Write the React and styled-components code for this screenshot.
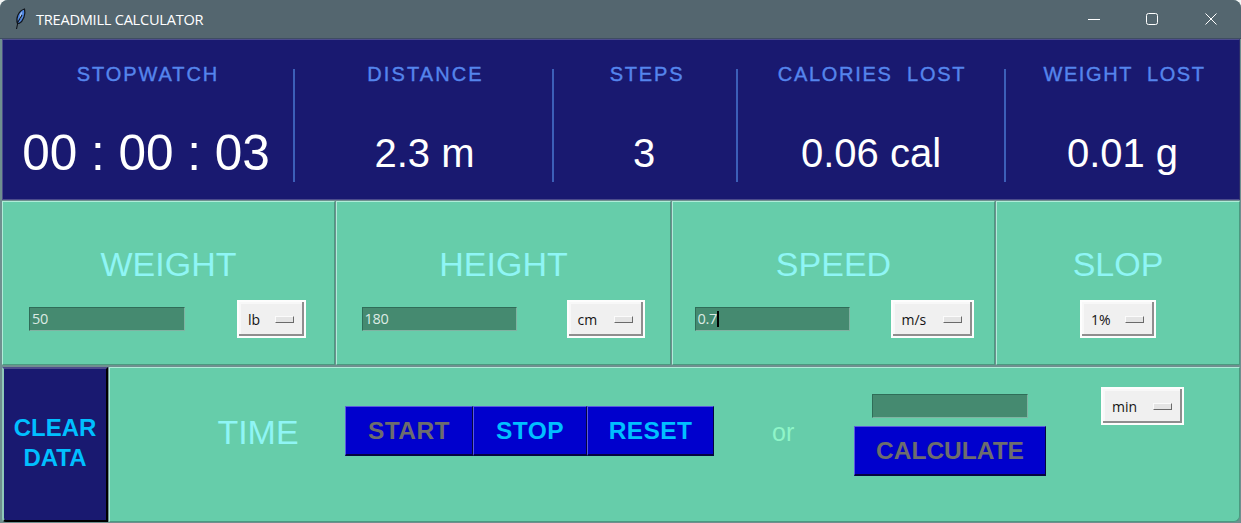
import React from "react";
import styled, { createGlobalStyle } from "styled-components";

const GlobalStyle = createGlobalStyle`
  html, body {
    margin: 0;
    padding: 0;
    background: #f3f5f5;
  }
`;

const Window = styled.div`
  width: 1241px;
  height: 523px;
  overflow: hidden;
  display: flex;
  flex-direction: column;
  background: #6f8f8f;
  border-radius: 8px 8px 0 0;
  font-family: "Liberation Sans", Arial, sans-serif;
`;

const TitleBar = styled.div`
  height: 39px;
  flex: none;
  display: flex;
  align-items: center;
  background: #54666f;
  border-bottom: 1px solid #3f4d63;
  box-sizing: border-box;
  padding-left: 13px;
`;

const Title = styled.span`
  margin-left: 9px;
  color: #fff;
  font-family: "Open Sans", "Noto Sans", sans-serif;
  font-size: 14.6px;
  letter-spacing: -0.25px;
`;

const WinControls = styled.div`
  margin-left: auto;
  margin-right: 1px;
  display: flex;
  color: #fff;
`;

const WinButton = styled.div`
  width: 58.5px;
  height: 38px;
  display: flex;
  align-items: center;
  justify-content: center;
`;

const Stats = styled.div`
  height: 161px;
  flex: none;
  margin: 0 1px 0 2px;
  display: grid;
  grid-template-columns: 292px 259px 184px 268px 1fr;
  background: #191970;
  border: 1px solid #4c4c8c;
  border-right-color: #2b2b6b;
  box-sizing: border-box;
`;

const Stat = styled.div`
  position: relative;
  display: flex;
  flex-direction: column;
  align-items: center;
  padding-top: 23px;
`;

const Separator = styled.div`
  position: absolute;
  right: 0;
  top: 29px;
  width: 2px;
  height: 113px;
  background: #3c5fb8;
`;

const StatLabel = styled.div`
  color: #5585ec;
  font-size: 20px;
  font-weight: 400;
  line-height: 22px;
  letter-spacing: ${(p) => p.$spacing}px;
  -webkit-text-stroke: 0.4px #5585ec;
  white-space: pre;
  transform: translateX(${(p) => p.$shift || 0}px);
`;

const StatValue = styled.div`
  margin-top: 40px;
  height: 56px;
  line-height: 56px;
  color: #fff;
  font-size: ${(p) => (p.$large ? 49.5 : 40)}px;
  white-space: pre;
  transform: translateX(${(p) => p.$shift || 0}px);
`;

const InputRow = styled.div`
  height: 164px;
  flex: none;
  margin-top: 1px;
  padding: 0 1px 0 2px;
  display: grid;
  grid-template-columns: 333px 335px 323px 1fr;
  gap: 1px;
`;

const Panel = styled.div`
  background: #66cdaa;
  border: 1px solid;
  border-color: #b0ecd8 #4b9a80 #4b9a80 #b0ecd8;
  padding: 1px;
  box-sizing: border-box;
`;

const FieldPanel = styled(Panel)`
  display: flex;
  flex-direction: column;
`;

const FieldLabel = styled.div`
  margin-top: 41px;
  text-align: center;
  color: #8ff5f5;
  font-size: 34px;
  line-height: 40px;
`;

const FieldControls = styled.div`
  margin-top: 16px;
  display: flex;
  align-items: center;
  justify-content: center;
  padding-left: ${(p) => p.$lead || 0}px;
  padding-right: ${(p) => p.$trim || 0}px;
`;

const Entry = styled.div`
  position: relative;
  width: ${(p) => p.$width || 156}px;
  height: 24px;
  flex: none;
  box-sizing: border-box;
  padding-left: 2px;
  background: #458a70;
  border: 1px solid;
  border-color: #2f6d58 #7fb3a2 #7fb3a2 #2f6d58;
  color: #dcebe4;
  font-family: "Open Sans", "Noto Sans", sans-serif;
  font-size: 14.5px;
  line-height: 22px;
  letter-spacing: -0.3px;
`;

const Caret = styled.span`
  display: inline-block;
  width: 2px;
  height: 16px;
  vertical-align: -3px;
  background: #000;
`;

const Dropdown = styled.div`
  height: 38px;
  flex: none;
  box-sizing: border-box;
  margin-left: ${(p) => p.$gap || 0}px;
  padding: 0 10px 0 9px;
  display: flex;
  align-items: center;
  justify-content: space-between;
  width: ${(p) => p.$width}px;
  background: #f0f0f0;
  border: 2px solid #fdfdfd;
  box-shadow: inset -2px -2px 0 #8e8e8e, inset 2px 2px 0 #f8f8f8;
  color: #141414;
  font-family: "Open Sans", "Noto Sans", sans-serif;
  font-size: 14px;
`;

const Indicator = styled.span`
  width: 19px;
  height: 7px;
  box-sizing: border-box;
  background: #e4e4e4;
  border: 1px solid;
  border-color: #fbfbfb #6a6a6a #6a6a6a #fbfbfb;
`;

const ActionRow = styled.div`
  flex: 1;
  margin-top: 2px;
  margin-bottom: 1px;
  padding: 0 1px 0 2px;
  display: flex;
  gap: 1px;
`;

const RaisedButton = styled.div`
  display: flex;
  align-items: center;
  justify-content: center;
  box-sizing: border-box;
  font-weight: 700;
  font-size: 24.5px;
  letter-spacing: ${(p) => p.$spacing ?? 0.4}px;
  border-style: solid;
  border-width: 1px 1px 2px 1px;
  border-color: #5a5ae0 #050540 #050540 #5a5ae0;
  background: #0000cd;
  color: ${(p) => (p.$disabled ? "#6d6d6d" : "#00bfff")};
`;

const ClearButton = styled(RaisedButton)`
  width: 106px;
  flex: none;
  padding-bottom: 4px;
  text-align: center;
  font-size: 24px;
  letter-spacing: 0;
  line-height: 30px;
  background: #191970;
  border-width: 2px;
  border-color: #4c4c8c #000 #000 #8fc8b8;
  border-radius: 0 0 0 4px;
`;

const TimePanel = styled(Panel)`
  flex: 1;
  display: flex;
  align-items: flex-start;
  border-radius: 0 0 6px 0;
`;

const TimeLabel = styled.div`
  width: 106px;
  margin: 43px 34px 0 94px;
  text-align: center;
  color: #8ff5f5;
  font-size: 34px;
  line-height: 40px;
`;

const ButtonGroup = styled.div`
  margin-top: 37px;
  display: flex;
`;

const GroupButton = styled(RaisedButton)`
  width: ${(p) => p.$width}px;
  height: 50px;
`;

const OrLabel = styled.div`
  width: 24px;
  margin: 49px 58px 0 58px;
  color: #8ff5c8;
  font-size: 25px;
  line-height: 28px;
`;

const CalcColumn = styled.div`
  width: 192px;
  margin-top: 25px;
  display: flex;
  flex-direction: column;
  align-items: center;
  gap: 8px;
`;

const CalcButton = styled(RaisedButton)`
  width: 192px;
  height: 50px;
`;

const TimeUnit = styled.div`
  margin: 18px 0 0 55px;
`;

const Feather = () => (
  <svg width="14" height="22" viewBox="0 0 14 22">
    <path d="M4.5 15.5 C2.5 10 5.5 3 11.5 1 C12.8 6 10.5 13 6 15.5 Z" fill="#4f86e0" stroke="#10151c" strokeWidth="1.2" />
    <path d="M8.5 4.5 C7.5 7 7 9 7.5 11" fill="none" stroke="#cfe0f8" strokeWidth="1" />
    <path d="M3.5 21 L5 14 L9 7" fill="none" stroke="#10151c" strokeWidth="1.1" />
  </svg>
);

const stats = [
  { label: "STOPWATCH", value: "00 : 00 : 03", large: true, spacing: 1.9, shift: -1, valueShift: -3 },
  { label: "DISTANCE", value: "2.3 m", spacing: 2.1, shift: 1 },
  { label: "STEPS", value: "3", spacing: 1.8, shift: 1, valueShift: -2 },
  { label: "CALORIES  LOST", value: "0.06 cal", spacing: 1.7, valueShift: -1 },
  { label: "WEIGHT  LOST", value: "0.01 g", spacing: 1.6, shift: 2 },
];

const fields = [
  { label: "WEIGHT", value: "50", unit: "lb", unitWidth: 69, gap: 52, trim: 2 },
  { label: "HEIGHT", value: "180", unit: "cm", unitWidth: 78, gap: 50, entryWidth: 155, trim: 1 },
  { label: "SPEED", value: "0.7", unit: "m/s", unitWidth: 83, gap: 41, entryWidth: 155, lead: 1 },
];

const App = () => (
  <>
    <GlobalStyle />
    <Window>
      <TitleBar>
        <Feather />
        <Title>TREADMILL CALCULATOR</Title>
        <WinControls>
          <WinButton>
            <svg width="12" height="12" viewBox="0 0 12 12">
              <path d="M0 6.5H12" stroke="#fff" strokeWidth="1" />
            </svg>
          </WinButton>
          <WinButton>
            <svg width="12" height="12" viewBox="0 0 12 12">
              <rect x="0.5" y="0.5" width="11" height="11" rx="2" fill="none" stroke="#fff" strokeWidth="1" />
            </svg>
          </WinButton>
          <WinButton>
            <svg width="12" height="12" viewBox="0 0 12 12">
              <path d="M0.5 0.5L11.5 11.5M11.5 0.5L0.5 11.5" stroke="#fff" strokeWidth="1" />
            </svg>
          </WinButton>
        </WinControls>
      </TitleBar>

      <Stats>
        {stats.map((s, i) => (
          <Stat key={s.label}>
            <StatLabel $spacing={s.spacing} $shift={s.shift}>{s.label}</StatLabel>
            <StatValue $large={s.large} $shift={s.valueShift}>{s.value}</StatValue>
            {i < stats.length - 1 && <Separator />}
          </Stat>
        ))}
      </Stats>

      <InputRow>
        {fields.map((f) => (
          <FieldPanel key={f.label}>
            <FieldLabel>{f.label}</FieldLabel>
            <FieldControls $trim={f.trim} $lead={f.lead}>
              <Entry $width={f.entryWidth}>
                {f.value}
                {f.label === "SPEED" && <Caret />}
              </Entry>
              <Dropdown $width={f.unitWidth} $gap={f.gap}>
                {f.unit}
                <Indicator />
              </Dropdown>
            </FieldControls>
          </FieldPanel>
        ))}
        <FieldPanel>
          <FieldLabel>SLOP</FieldLabel>
          <FieldControls>
            <Dropdown $width={76}>
              1%
              <Indicator />
            </Dropdown>
          </FieldControls>
        </FieldPanel>
      </InputRow>

      <ActionRow>
        <ClearButton>
          CLEAR
          <br />
          DATA
        </ClearButton>
        <TimePanel>
          <TimeLabel>TIME</TimeLabel>
          <ButtonGroup>
            <GroupButton $width={128} $disabled>START</GroupButton>
            <GroupButton $width={114}>STOP</GroupButton>
            <GroupButton $width={127}>RESET</GroupButton>
          </ButtonGroup>
          <OrLabel>or</OrLabel>
          <CalcColumn>
            <Entry />
            <CalcButton $disabled $spacing={0}>CALCULATE</CalcButton>
          </CalcColumn>
          <TimeUnit>
            <Dropdown $width={83}>
              min
              <Indicator />
            </Dropdown>
          </TimeUnit>
        </TimePanel>
      </ActionRow>
    </Window>
  </>
);

export default App;
